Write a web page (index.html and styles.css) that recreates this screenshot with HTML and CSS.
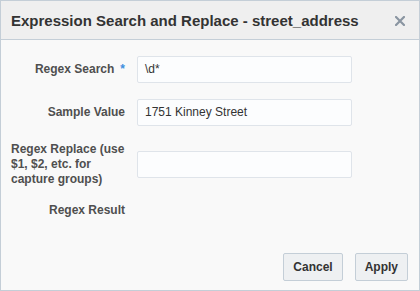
FILE: index.html
```html
<!DOCTYPE html>
<html>
<head>
<meta charset="utf-8">
<link rel="stylesheet" href="styles.css">
</head>
<body>
<div class="dialog">
  <div class="header">
    <div class="title">Expression Search and Replace - street_address</div>
    <svg class="close" width="10" height="10" viewBox="0 0 10 10"><path d="M1 1L9 9M9 1L1 9" stroke="#8a95a1" stroke-width="2.2" stroke-linecap="square"/></svg>
  </div>
  <div class="body">
    <div class="form">
      <div class="label-cell"><span class="label">Regex Search<span class="req">*</span></span></div>
      <div class="field"><div class="input">\d*</div></div>
      <div class="label-cell"><span class="label">Sample Value</span></div>
      <div class="field"><div class="input">1751 Kinney Street</div></div>
      <div class="label-cell"><span class="label">Regex Replace (use $1, $2, etc. for capture groups)</span></div>
      <div class="field"><div class="input"></div></div>
      <div class="label-cell"><span class="label">Regex Result</span></div>
      <div class="field"></div>
    </div>
    <div class="footer">
      <button class="btn">Cancel</button>
      <button class="btn">Apply</button>
    </div>
  </div>
</div>
</body>
</html>
```
FILE: styles.css
```css
html, body {
  margin: 0;
  padding: 0;
}
body {
  font-family: "Liberation Sans", Arial, sans-serif;
  color: #333;
}
.dialog {
  width: 420px;
  height: 291px;
  box-sizing: border-box;
  border: 1px solid #c4ced7;
  background: #f9f9f9;
  display: flex;
  flex-direction: column;
}
.header {
  height: 38px;
  background: #efefef;
  border-bottom: 1px solid #c4ced7;
  display: flex;
  align-items: center;
  padding: 0 14px 0 10px;
}
.title {
  flex: 1;
  font-size: 15px;
  font-weight: bold;
  color: #333;
  padding-top: 1px;
}
.close {
  margin-top: 1px;
}
.body {
  flex: 1;
  display: flex;
  flex-direction: column;
  padding: 16px 10px 9px 10px;
}
.form {
  display: grid;
  grid-template-columns: 114px 215px;
  column-gap: 12px;
  row-gap: 16px;
  align-items: center;
}
.label-cell {
  text-align: right;
  font-size: 12px;
  font-weight: bold;
  color: #4f4f4f;
  line-height: 15px;
}
.label {
  display: inline-block;
  text-align: left;
}
.req {
  color: #3f8fde;
  margin-left: 6px;
}
.field {
  min-height: 15px;
}
.input {
  height: 25px;
  box-sizing: content-box;
  border: 1px solid #dfe4ea;
  border-radius: 2px;
  background: #fcfdfe;
  font-size: 12px;
  line-height: 25px;
  padding: 0 7px;
  color: #333;
}
.footer {
  margin-top: auto;
  display: flex;
  justify-content: flex-end;
  gap: 12px;
  padding-right: 1px;
}
.btn {
  height: 28px;
  border: 1px solid #c4ced7;
  border-radius: 2px;
  background: #eef0f2;
  font-family: "Liberation Sans", Arial, sans-serif;
  font-size: 12px;
  font-weight: bold;
  color: #333;
  padding: 0 9px;
}
```
